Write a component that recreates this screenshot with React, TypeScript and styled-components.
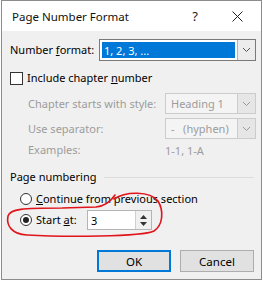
import { createGlobalStyle, styled } from 'styled-components';

const GlobalStyle = createGlobalStyle`
  html, body {
    margin: 0;
    padding: 0;
    background: #ffffff;
  }
  body {
    font-family: 'Noto Sans', 'Open Sans', sans-serif;
    font-size: 11px;
  }
`;

const Chevron = ({ color }: { color: string }) => (
  <svg width="9" height="6" viewBox="0 0 9 6">
    <path d="M1 1 L4.5 4.5 L8 1" fill="none" stroke={color} strokeWidth="1" />
  </svg>
);

export default function App() {
  return (
    <>
      <GlobalStyle />
      <Dialog>
        <TitleBar>
          <Title>Page Number Format</Title>
          <TitleButtons>
            <Help>?</Help>
            <svg width="11" height="11" viewBox="0 0 11 11">
              <path d="M0.5 0.5 L10.5 10.5 M10.5 0.5 L0.5 10.5" stroke="#222" strokeWidth="1" />
            </svg>
          </TitleButtons>
        </TitleBar>
        <Body>
          <Row $top={8}>
            <Label>
              Number <u>f</u>ormat:
            </Label>
            <Dropdown $width={157}>
              <DropText $selected>1, 2, 3, ...</DropText>
              <DropButton>
                <Chevron color="#555" />
              </DropButton>
            </Dropdown>
          </Row>
          <Row $top={9}>
            <Checkbox />
            <Label>
              Include chapter <u>n</u>umber
            </Label>
          </Row>
          <Row $top={7} $indent={18}>
            <Label $disabled>Chapter starts with style:</Label>
            <Dropdown $disabled $width={91}>
              <DropText $disabled>Heading 1</DropText>
              <DropButton $disabled>
                <Chevron color="#999" />
              </DropButton>
            </Dropdown>
          </Row>
          <Row $top={4} $indent={18}>
            <Label $disabled>Use separator:</Label>
            <Dropdown $disabled $width={91}>
              <DropText $disabled>-&nbsp;&nbsp;&nbsp;(hyphen)</DropText>
              <DropButton $disabled>
                <Chevron color="#999" />
              </DropButton>
            </Dropdown>
          </Row>
          <Row $top={3} $indent={18}>
            <Label $disabled>Examples:</Label>
            <Example>1-1, 1-A</Example>
          </Row>
          <Row $top={11}>
            <Label>Page numbering</Label>
            <Rule />
          </Row>
          <Row $top={6} $indent={10}>
            <Radio />
            <Label>
              <u>C</u>ontinue from previous section
            </Label>
          </Row>
          <Row $top={3} $indent={10}>
            <Radio $checked />
            <StartLabel>
              Start <u>a</u>t:
            </StartLabel>
            <Spin>
              <SpinValue>3</SpinValue>
              <SpinButtons>
                <svg width="7" height="4" viewBox="0 0 7 4">
                  <path d="M0 4 L3.5 0 L7 4 Z" fill="#333" />
                </svg>
                <svg width="7" height="4" viewBox="0 0 7 4">
                  <path d="M0 0 L3.5 4 L7 0 Z" fill="#333" />
                </svg>
              </SpinButtons>
            </Spin>
          </Row>
          <Buttons>
            <Button $primary>OK</Button>
            <Button>Cancel</Button>
          </Buttons>
        </Body>
        <Scribble width="170" height="50" viewBox="0 0 170 50">
          <path
            d="M112 8 C124 0, 148 0, 156 10 C162 20, 161 34, 152 40 C140 46, 60 46, 25 44 C10 43, 4 35, 6 25 C8 18, 20 17, 60 17 L94 16 C104 15, 109 10, 113 4"
            fill="none"
            stroke="#e0141b"
            strokeWidth="1.6"
            strokeLinecap="round"
          />
        </Scribble>
      </Dialog>
    </>
  );
}

const Dialog = styled.div`
  position: relative;
  width: 259px;
  height: 278px;
  margin-left: 1px;
  border: 1px solid #8c8c8c;
  background: #f0f0f0;
  display: flex;
  flex-direction: column;
`;

const TitleBar = styled.div`
  height: 30px;
  background: #ffffff;
  display: flex;
  align-items: center;
  padding: 0 10px 0 10px;
  flex-shrink: 0;
`;

const Title = styled.div`
  font-size: 11.5px;
  color: #111;
`;

const TitleButtons = styled.div`
  margin-left: auto;
  display: flex;
  align-items: center;
  gap: 34px;
  padding-right: 8px;
`;

const Help = styled.span`
  font-size: 13px;
  color: #222;
`;

const Body = styled.div`
  display: flex;
  flex-direction: column;
  padding: 0 5px 0 8px;
`;

const Row = styled.div<{ $top: number; $indent?: number }>`
  display: flex;
  align-items: center;
  min-height: 16px;
  margin-top: ${(p) => p.$top}px;
  padding-left: ${(p) => p.$indent ?? 0}px;
`;

const Label = styled.span<{ $disabled?: boolean }>`
  color: ${(p) => (p.$disabled ? '#9c9c9c' : '#000')};
  white-space: nowrap;
  line-height: 16px;
`;

const Dropdown = styled.div<{ $disabled?: boolean; $width: number }>`
  margin-left: auto;
  width: ${(p) => p.$width}px;
  height: ${(p) => (p.$disabled ? 21 : 22)}px;
  box-sizing: border-box;
  border: 1px solid ${(p) => (p.$disabled ? '#cccccc' : '#7a7a7a')};
  background: ${(p) => (p.$disabled ? '#f4f4f4' : '#ffffff')};
  display: flex;
  align-items: stretch;
`;

const DropText = styled.div<{ $selected?: boolean; $disabled?: boolean }>`
  flex: 1;
  display: flex;
  align-items: center;
  margin: ${(p) => (p.$selected ? '2px' : '0')};
  padding-left: ${(p) => (p.$selected ? '2px' : '5px')};
  background: ${(p) => (p.$selected ? '#0078d7' : 'transparent')};
  color: ${(p) => (p.$selected ? '#fff' : p.$disabled ? '#9c9c9c' : '#000')};
`;

const DropButton = styled.div<{ $disabled?: boolean }>`
  width: 17px;
  display: flex;
  align-items: center;
  justify-content: center;
  background: ${(p) => (p.$disabled ? '#e6e6e6' : '#ececec')};
  border-left: 1px solid ${(p) => (p.$disabled ? '#cccccc' : '#b4b4b4')};
`;

const Checkbox = styled.div`
  width: 13px;
  height: 13px;
  box-sizing: border-box;
  border: 1px solid #333;
  background: #fff;
  margin-right: 4px;
`;

const Example = styled.span`
  margin-left: auto;
  width: 91px;
  color: #9c9c9c;
`;

const Rule = styled.div`
  flex: 1;
  height: 1px;
  background: #dcdcdc;
  margin-left: 8px;
  margin-right: 2px;
`;

const Radio = styled.div<{ $checked?: boolean }>`
  width: 12px;
  height: 12px;
  box-sizing: border-box;
  border-radius: 50%;
  border: 1px solid #333;
  background: #fff;
  margin-right: 4px;
  display: flex;
  align-items: center;
  justify-content: center;
  &::after {
    content: '';
    width: 6px;
    height: 6px;
    border-radius: 50%;
    background: ${(p) => (p.$checked ? '#222' : 'transparent')};
  }
`;

const StartLabel = styled(Label)`
  width: 51px;
`;

const Spin = styled.div`
  width: 65px;
  height: 20px;
  box-sizing: border-box;
  border: 1px solid #b4b4b4;
  background: #fff;
  display: flex;
`;

const SpinValue = styled.div`
  flex: 1;
  padding-left: 3px;
  display: flex;
  align-items: center;
`;

const SpinButtons = styled.div`
  width: 15px;
  background: #f0f0f0;
  border-left: 1px solid #d0d0d0;
  display: flex;
  flex-direction: column;
  align-items: center;
  justify-content: center;
  gap: 3px;
`;

const Buttons = styled.div`
  display: flex;
  justify-content: flex-end;
  gap: 9px;
  margin-top: 20px;
  padding-right: 2px;
`;

const Button = styled.button<{ $primary?: boolean }>`
  width: 74px;
  height: 22px;
  box-sizing: border-box;
  font-family: inherit;
  font-size: 11.5px;
  color: #000;
  background: #e1e1e1;
  border: ${(p) => (p.$primary ? '2px solid #0078d7' : '1px solid #adadad')};
  padding: 0;
`;

const Scribble = styled.svg`
  position: absolute;
  left: 0;
  top: 190px;
  pointer-events: none;
`;
